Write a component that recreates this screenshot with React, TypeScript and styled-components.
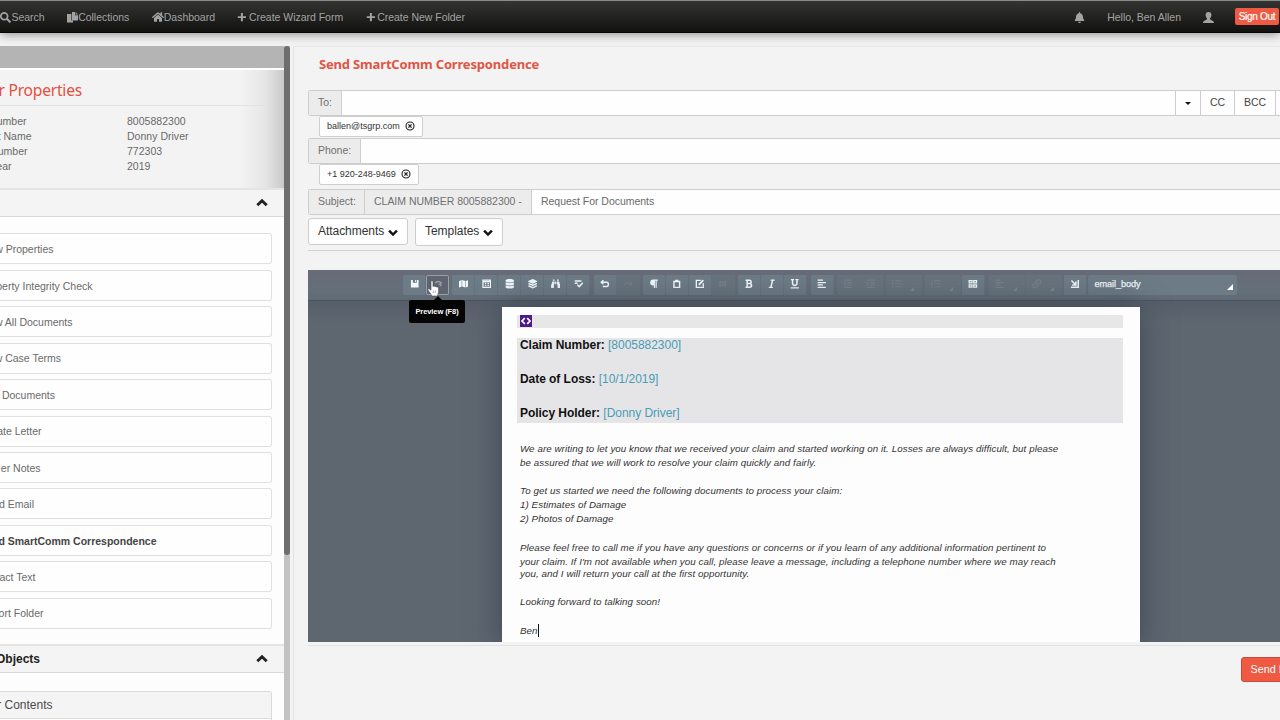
import React from 'react';
import styled, { createGlobalStyle, css } from 'styled-components';
import {
  FaMap, FaDatabase, FaLayerGroup, FaBinoculars, FaBell, FaBold, FaItalic, FaUnderline,
  FaAlignLeft, FaParagraph, FaHome, FaListUl, FaListOl, FaLink, FaIndent, FaOutdent,
} from 'react-icons/fa';
import { MdRedo, MdViewModule } from 'react-icons/md';

const Global = createGlobalStyle`
  * { box-sizing: border-box; }
  html, body { margin: 0; padding: 0; }
  body {
    width: 1280px; height: 720px; overflow: hidden; background: #f3f3f3;
    font-family: "Liberation Sans", Arial, sans-serif; font-size: 10.5px; color: #6a6a6a;
  }
  svg { display: block; flex: none; }
`;

const Shell = styled.div`
  width: 1280px; height: 720px; overflow: hidden; display: flex; flex-direction: column;
`;
const NavBar = styled.header`
  height: 33px; flex: none; display: flex; align-items: center; padding-top: 1px;
  border-top: 1px solid #8c8c8c; border-bottom: 1px solid #050505;
  background: linear-gradient(#343432, #111110); color: #a3a3a3; position: relative;
  box-shadow: 0 1px 10px rgba(0, 0, 0, 0.45);
`;
const NavItem = styled.a<{ $gap?: number; $space?: number }>`
  display: flex; align-items: center; gap: ${p => p.$space ?? 1}px;
  margin-left: ${p => p.$gap ?? 0}px; white-space: nowrap; line-height: 14px; letter-spacing: -0.02px;
`;
const NavFill = styled.div`flex: 1;`;
const SignOut = styled.button`
  width: 44px; height: 17px; border: 0; border-radius: 2px; background: #ee5a43; color: #fff; padding: 0;
  margin: -2px 1px 0 21px; font: 10px "Liberation Sans", Arial, sans-serif; letter-spacing: -0.3px;
  -webkit-text-stroke: 0.2px #fff;
`;

const Body = styled.div`flex: 1; display: flex; min-height: 0; padding-top: 13px;`;
const Sidebar = styled.aside`width: 284px; flex: none; overflow: hidden; background: #fdfdfd;`;
const GreyStrip = styled.div`height: 22px; background: #b4b4b4;`;
const Properties = styled.section`
  height: 120px; border-top: 2px solid #fff;
  background: linear-gradient(90deg, #f3f3f3 240px, #e6e6e6 265px, #c9c9c9 284px);
`;
const PropTitle = styled.h2`
  margin: 0 20px 0 0; height: 36px; padding-top: 9px; border-bottom: 1px solid #e2e2e2;
  font: 15.6px/22px "Noto Sans", "Open Sans", sans-serif; color: #e4503f; letter-spacing: -0.22px;
`;
const Clip = styled.span<{ $end: number }>`
  display: flex; justify-content: flex-end; width: ${p => p.$end}px; white-space: pre; flex: none;
`;
const PropList = styled.dl`margin: 0; padding-top: 8px;`;
const PropRow = styled.div`
  display: flex; height: 15px; line-height: 15px;
  dt { width: 127px; } dd { margin: 0; letter-spacing: 0.02px; }
`;
const SectionHead = styled.div<{ $h: number }>`
  height: ${p => p.$h}px; border-top: 2px solid #e4e4e4; border-bottom: 1px solid #d9d9d9; background: #f4f4f4;
  display: flex; align-items: center; justify-content: space-between; padding: 0 16px 1px 0;
  color: #222; font-weight: bold; font-size: 12px;
`;
const MenuList = styled.nav`
  height: 427px; padding: 16.4px 12px 0 0; display: flex; flex-direction: column; gap: 5.45px;
`;
const MenuItem = styled.a<{ $active?: boolean }>`
  height: 31px; flex: none; border: 1px solid #e0e0e0; border-left: 0; border-radius: 0 3px 3px 0; background: #fefefe;
  display: flex; align-items: center; padding-top: 0.4px;
  ${p => p.$active && css`font-weight: bold; color: #444;`}
`;
const ContentsBox = styled.div`
  margin: 18px 12px 0 0; height: 40px; border: 1px solid #d9d9d9; border-left: 0; border-radius: 0 3px 0 0; background: #fff;
  > div { height: 27px; display: flex; align-items: center; background: #f4f4f4; border-bottom: 1px solid #ddd; font-size: 12px; color: #4a4a4a; }
`;
const ScrollTrack = styled.div`width: 6px; flex: none; background: #c2c2c2;`;
const ScrollThumb = styled.div`height: 509px; border-radius: 3px; background: #6e6e6e;`;

const Main = styled.main`
  flex: 1; min-width: 0; margin-left: 3px; padding-left: 14px; border-left: 1px solid #e3e3e3; border-top: 1px solid #e6e6e6;
  display: flex; flex-direction: column; overflow: hidden;
`;
const Title = styled.h1`
  margin: 7px 0 16px 11px; height: 20px; flex: none; white-space: nowrap;
  font: bold 13px/20px "Noto Sans", "Open Sans", sans-serif; color: #e05544; letter-spacing: -0.17px;
`;
const FieldRow = styled.div`
  display: flex; height: 25.5px; flex: none; border: 1px solid #cdcdcd; border-right: 0; border-radius: 3px 0 0 3px;
  background: #fefefe; width: 972px; line-height: 22.6px;
`;
const Addon = styled.span<{ $w: number }>`
  width: ${p => p.$w}px; flex: none; padding-left: 9px; background: #ececec; border-right: 1px solid #cfcfcf; color: #707070; white-space: nowrap;
  letter-spacing: -0.02px;
`;
const FieldValue = styled.span`flex: 1; padding-left: 9px; white-space: nowrap; letter-spacing: -0.03px;`;
const RowButton = styled.button<{ $w: number }>`
  width: ${p => p.$w}px; flex: none; border: 0; border-left: 1px solid #cdcdcd; background: #fefefe; color: #444; padding: 0 0 1px;
  font: 10.5px "Liberation Sans", Arial, sans-serif; display: flex; align-items: center; justify-content: center;
`;
const Caret = styled.i`border: 3px solid transparent; border-top-color: #111; border-bottom: 0; margin-top: 2px;`;
const ChipRow = styled.div<{ $h: number }>`height: ${p => p.$h}px; flex: none; padding-left: 11px; display: flex; align-items: flex-start;`;
const Chip = styled.span<{ $w: number }>`
  width: ${p => p.$w}px; height: 21.5px; border: 1px solid #cfcfcf; border-radius: 2px; background: #fefefe; color: #333;
  display: flex; align-items: center; justify-content: space-between; padding: 0 7px 1.5px; font-size: 9px; white-space: nowrap;
`;
const Actions = styled.div`
  display: flex; gap: 7.5px; height: 36px; flex: none; padding-top: 3.500px; border-bottom: 1px solid #d2d2d2; margin-bottom: 19px;
`;
const DropButton = styled.button<{ $w: number; $h: number }>`
  width: ${p => p.$w}px; height: ${p => p.$h}px; border: 1px solid #cdcdcd; border-radius: 3px; background: #fefefe; color: #333;
  display: flex; align-items: center; justify-content: space-between; padding: 0 9px ${p => p.$h - 25}px; font: 12px "Liberation Sans", Arial, sans-serif;
  letter-spacing: -0.05px;
  svg { margin-top: 4px; }
`;

const Editor = styled.section`
  height: 372px; flex: none; background: #5e6670; display: flex; flex-direction: column; overflow: hidden; width: 972px;
`;
const Toolbar = styled.div`
  height: 31px; flex: none; display: flex; padding: 5px 0 0 95px; border-bottom: 1px solid #4b5460;
  background: linear-gradient(#686b78, #646f79 70%, #616b75);
`;
const Group = styled.div<{ $gap?: number }>`
  display: flex; height: 20px; margin-left: ${p => p.$gap ?? 0}px; flex: none;
`;
const Tool = styled.button<{ $off?: boolean; $hover?: boolean; $wide?: boolean }>`
  width: ${p => (p.$wide ? 36 : 23)}px; height: 20px; padding: 0 0 1px 6.5px; border: 0; border-radius: 1px;
  display: flex; align-items: center; color: #f1f7fb; background: #6d7b86; box-shadow: inset -1px 0 #65737e;
  > svg { width: 9.5px; height: 9.5px; }
  ${p => p.$off && css`background: #67737d; box-shadow: none; color: #74808a;`}
  ${p => p.$hover && css`background: #5e6470; color: #99a1aa; box-shadow: inset 0 0 0 1px #989fa9; border-radius: 2px;`}
`;
const Corner = styled.i<{ $dim?: boolean }>`
  border-left: ${p => (p.$dim ? 4 : 6)}px solid transparent; border-bottom: ${p => (p.$dim ? 4 : 6)}px solid ${p => (p.$dim ? '#7d8993' : '#fff')};
  margin: ${p => (p.$dim ? '10px 0 0 8px' : '6px 0 0')};
`;
const BodySelect = styled.div`
  width: 149px; height: 20px; margin-left: 1.5px; background: #6d7b86; border-radius: 2px; color: #eef3f6;
  display: flex; align-items: center; justify-content: space-between; padding: 0 4px 1px 6.5px; font-size: 9.2px; letter-spacing: -0.1px;
  -webkit-text-stroke: 0.25px #eef3f6;
`;
const Canvas = styled.div`flex: 1; padding: 6px 0 0 193.5px; min-height: 0; background: linear-gradient(#565f69, #5e6670 22px);`;
const Paper = styled.article`
  width: 638.5px; height: 340px; background: #fdfdfd; padding: 8px 17px 0 15px; box-shadow: 0 0 28px rgba(50, 62, 72, 0.75);
  color: #333; white-space: nowrap;
`;
const TagBar = styled.div`height: 13px; background: #e7e7e8; padding-left: 3px; display: flex; align-items: center; margin-bottom: 10px;`;
const FieldBlock = styled.div`height: 85px; background: #e5e5e8; padding-left: 3.5px; font-size: 12px; color: #111; margin-bottom: 19px;`;
const FieldLine = styled.p`
  margin: 0; height: 34px; line-height: 14px;
  b { letter-spacing: -0.05px; } span { color: #4a9cb5; letter-spacing: -0.03px; }
`;
const Paragraph = styled.div`padding-left: 3.5px; margin-bottom: 14.3px; font-size: 9.75px; font-style: italic;`;
const Line = styled.p<{ $h?: number }>`
  margin: 0; height: ${p => p.$h ?? 14.15}px; line-height: 14px; letter-spacing: 0.077px;
`;
const TextCursor = styled.i`display: inline-block; width: 1px; height: 13px; background: #111; vertical-align: -3px;`;
const Footer = styled.footer`
  width: 972px; flex: none; margin-top: 3px; border-top: 1px solid #e2e2e2; display: flex; justify-content: flex-end; padding-top: 11px;
`;
const SendButton = styled.button`
  width: 90px; height: 25.5px; flex: none; border: 1px solid #c9483a; border-radius: 3px; background: #f05a43; color: #fff;
  font: 10.8px "Liberation Sans", Arial, sans-serif; text-align: left; padding: 0 9px; margin-right: -50.5px; white-space: nowrap;
`;
const Tooltip = styled.div`
  position: absolute; left: 409px; top: 300px; width: 56px; height: 23px; border-radius: 2px; background: #050505; color: #fff;
  font-size: 7.5px; font-weight: bold; line-height: 23px; text-align: center; white-space: nowrap; z-index: 2; letter-spacing: -0.08px;
  &::before {
    content: ''; position: absolute; left: 25px; top: -4px; border: 4px solid transparent; border-bottom-color: #050505; border-top: 0;
  }
`;
const Pointer = styled.svg`position: absolute; left: 427px; top: 279.5px; z-index: 3;`;

const Chevron = ({ up, size = 12, color = '#222' }: { up?: boolean; size?: number; color?: string }) => (
  <svg width={size} height={size * 0.75} viewBox="0 0 12 9" fill="none" stroke={color} strokeWidth="2.9">
    <path d={up ? 'M1.3 7.3 6 2.7l4.7 4.6' : 'M1.3 2 6 6.6 10.7 2'} />
  </svg>
);
const CloseCircle = () => (
  <svg width="10" height="10" viewBox="0 0 10 10" fill="none" stroke="#222" strokeWidth="1.1">
    <circle cx="5" cy="5" r="4" /><path d="M3.4 3.4l3.2 3.2M6.6 3.4L3.4 6.6" strokeWidth="1.3" />
  </svg>
);
const SearchIcon = () => (
  <svg width="11" height="11" viewBox="0 0 11 11" fill="none" stroke="currentColor" strokeWidth="1.7">
    <circle cx="4.2" cy="4.2" r="3.4" /><path d="M6.8 6.8l3.6 3.6" strokeWidth="2" />
  </svg>
);
const CollectionsIcon = () => (
  <svg width="11" height="11" viewBox="0 0 11 11" fill="currentColor">
    <path d="M0 2h4.400v6.500H6V10.500H0z" /><path d="M5 0h3v3.200h3V8.500H5z" /><path d="M8.600 0 11 2.600H8.600z" />
  </svg>
);
const PlusIcon = () => (
  <svg width="10" height="10" viewBox="0 0 10 10" fill="currentColor"><path d="M3.900 1h2v3.200H9v1.900H5.900V9.300h-2V6.100H.8V4.200h3.100z" /></svg>
);
const PersonIcon = () => (
  <svg width="11" height="11" viewBox="0 0 11 11" fill="currentColor">
    <path d="M5.5 0c1.900 0 2.900 1.200 2.900 2.900 0 1.500-.7 2.600-1.400 3.300v1c.5 1 4 1 4 3.800H0c0-2.800 3.500-2.800 4-3.800v-1C3.300 5.500 2.600 4.400 2.600 2.900 2.600 1.200 3.600 0 5.500 0z" />
  </svg>
);
const SaveIcon = () => (
  <svg viewBox="0 0 10 10"><path fill="currentColor" fillRule="evenodd" d="M1 1h2v3h4.200V1H9v8H1zM5.400 1h1v2.200h-1z" /></svg>
);
const PreviewIcon = () => (
  <svg viewBox="0 0 10 10" fill="none" stroke="currentColor" strokeWidth="1.500"><path d="M2.500 4.500C4 1.800 7.500 2 9 5" /><path d="M6 5.500h2v2" /></svg>
);
const FieldsIcon = () => (
  <svg viewBox="0 0 10 10" fill="none" stroke="currentColor" strokeWidth="1.3">
    <rect x="1" y="1.200" width="8" height="7.600" /><path d="M1 2.800h8M3 4.600h1.500M5.800 4.600h1.500M3 6.600h1.500M5.800 6.600h1.500" />
  </svg>
);
const SpellIcon = () => (
  <svg viewBox="0 0 10 10" fill="none" stroke="currentColor" strokeWidth="1.600">
    <path d="M.8 2.200h7M.8 4.400h3M3.500 6l2 2L9.200 4" />
  </svg>
);
const UndoIcon = () => (
  <svg viewBox="0 0 10 10" fill="none" stroke="currentColor" strokeWidth="1.500">
    <path d="M3.600 1.300 1.300 3.400l2.300 2.100M1.300 3.400H7a1.800 2.200 0 0 1 0 4.500H3" />
  </svg>
);
const PasteIcon = () => (
  <svg viewBox="0 0 10 10" fill="none" stroke="currentColor" strokeWidth="1.500">
    <path d="M2 2.700h6v6.100H2z" /><path d="M3.300 1.900h3.400" strokeWidth="2.200" />
  </svg>
);
const EditIcon = () => (
  <svg viewBox="0 0 10 10" fill="none" stroke="currentColor" strokeWidth="1.400">
    <path d="M6 1.500H1.400v7.300h7.300V4.500" /><path d="M4 6.300 8.700 1.300" strokeWidth="1.900" />
  </svg>
);
const InsertIcon = () => (
  <svg viewBox="0 0 10 10" fill="none" stroke="currentColor" strokeWidth="1.600">
    <path d="M1.500 1.500 6 6M6.200 2.500v3.700H2.300M8.700 1v7.700H1" />
  </svg>
);
const GridIcon = () => (
  <svg viewBox="0 0 10 10" fill="none" stroke="currentColor" strokeWidth="1.300">
    <path d="M1.200 1.700h3v2.400h-3zM6 1.700h3v2.400H6zM1.200 6.100h3v2.400h-3zM6 6.100h3v2.400H6z" />
  </svg>
);
const CodeTag = () => (
  <svg width="12" height="12" viewBox="0 0 12 12">
    <rect width="12" height="12" fill="#4d1a8b" />
    <path d="M4.800 3.200 2 6l2.800 2.800M7.200 3.200 10 6 7.200 8.800" fill="none" stroke="#fff" strokeWidth="1.700" />
  </svg>
);

const properties: [string, number, string][] = [
  ['umber', 26.5, '8005882300'], ['t Name', 31.5, 'Donny Driver'], ['umber', 27.5, '772303'], ['ear', 11.5, '2019'],
];
const menu: [string, number][] = [
  ['w Properties', 53.5], ['perty Integrity Check', 92.5], ['w All Documents', 72.5], ['w Case Terms', 61], ['Documents', 55],
  ['ate Letter', 41.5], ['er Notes', 40.5], ['d Email', 34], ['d SmartComm Correspondence', 156.5], ['act Text', 35.5], ['ort Folder', 43.5],
];

export default function App() {
  return (
    <Shell>
      <Global />
      <NavBar>
        <NavItem $space={0.5}><SearchIcon />Search</NavItem>
        <NavItem $gap={22} $space={0.5}><CollectionsIcon />Collections</NavItem>
        <NavItem $gap={22.5} $space={-0.5}><FaHome size={12} />Dashboard</NavItem>
        <NavItem $gap={22.5} $space={1.5}><PlusIcon />Create Wizard Form</NavItem>
        <NavItem $gap={22.5} $space={1.5}><PlusIcon />Create New Folder</NavItem>
        <NavFill />
        <NavItem><FaBell size={11} /></NavItem>
        <NavItem $gap={22}>Hello, Ben Allen</NavItem>
        <NavItem $gap={22}><PersonIcon /></NavItem>
        <SignOut>Sign Out</SignOut>
      </NavBar>
      <Body>
        <Sidebar>
          <GreyStrip />
          <Properties>
            <PropTitle><Clip $end={82}>r Properties</Clip></PropTitle>
            <PropList>
              {properties.map(([label, end, value], i) => (
                <PropRow key={i}><dt><Clip $end={end}>{label}</Clip></dt><dd>{value}</dd></PropRow>
              ))}
            </PropList>
          </Properties>
          <SectionHead $h={29}><span /><Chevron up /></SectionHead>
          <MenuList>
            {menu.map(([label, end]) => (
              <MenuItem key={label} $active={label.startsWith('d Smart')}><Clip $end={end}>{label}</Clip></MenuItem>
            ))}
          </MenuList>
          <SectionHead $h={29}><Clip $end={40}>Objects</Clip><Chevron up /></SectionHead>
          <ContentsBox><div><Clip $end={52.5}>r Contents</Clip></div></ContentsBox>
        </Sidebar>
        <ScrollTrack><ScrollThumb /></ScrollTrack>
        <Main>
          <Title>Send SmartComm Correspondence</Title>
          <FieldRow>
            <Addon $w={33}>To:</Addon><FieldValue />
            <RowButton $w={25}><Caret /></RowButton>
            <RowButton $w={34}>CC</RowButton>
            <RowButton $w={41}>BCC</RowButton>
            <RowButton $w={5} />
          </FieldRow>
          <ChipRow $h={22.5}><Chip $w={104}>ballen@tsgrp.com<CloseCircle /></Chip></ChipRow>
          <FieldRow><Addon $w={52}>Phone:</Addon><FieldValue /></FieldRow>
          <ChipRow $h={25.5}><Chip $w={100}>+1 920-248-9469<CloseCircle /></Chip></ChipRow>
          <FieldRow>
            <Addon $w={56}>Subject:</Addon><Addon $w={167}>CLAIM NUMBER 8005882300 -</Addon>
            <FieldValue>Request For Documents</FieldValue>
          </FieldRow>
          <Actions>
            <DropButton $w={99.5} $h={27}>Attachments<Chevron size={10} color="#111" /></DropButton>
            <DropButton $w={87.5} $h={28}>Templates<Chevron size={10} color="#111" /></DropButton>
          </Actions>
          <Editor>
            <Toolbar>
              <Group><Tool><SaveIcon /></Tool><Tool $hover><PreviewIcon /></Tool></Group>
              <Group $gap={3}>
                <Tool><FaMap /></Tool><Tool><FieldsIcon /></Tool><Tool><FaDatabase /></Tool><Tool><FaLayerGroup /></Tool>
                <Tool><FaBinoculars /></Tool><Tool><SpellIcon /></Tool>
              </Group>
              <Group $gap={3.5}><Tool><UndoIcon /></Tool><Tool $off><MdRedo /></Tool></Group>
              <Group $gap={3}><Tool><FaParagraph /></Tool><Tool><PasteIcon /></Tool><Tool><EditIcon /></Tool><Tool $off><MdViewModule /></Tool></Group>
              <Group $gap={3}><Tool><FaBold /></Tool><Tool><FaItalic /></Tool><Tool><FaUnderline /></Tool></Group>
              <Group $gap={4}><Tool><FaAlignLeft /></Tool></Group>
              <Group $gap={3}><Tool $off><FaOutdent /></Tool><Tool $off><FaIndent /></Tool></Group>
              <Group $gap={3}><Tool $off $wide><FaListUl /><Corner $dim /></Tool></Group>
              <Group $gap={3}><Tool $off $wide><FaListOl /><Corner $dim /></Tool></Group>
              <Group $gap={1}><Tool><GridIcon /></Tool></Group>
              <Group $gap={4}><Tool $off $wide><FaAlignLeft /><Corner $dim /></Tool></Group>
              <Group $gap={1}><Tool $off $wide><FaLink /><Corner $dim /></Tool></Group>
              <Group $gap={2}><Tool><InsertIcon /></Tool></Group>
              <BodySelect>email_body<Corner /></BodySelect>
            </Toolbar>
            <Canvas>
              <Paper>
                <TagBar><CodeTag /></TagBar>
                <FieldBlock>
                  <FieldLine><b>Claim Number:</b> <span>[8005882300]</span></FieldLine>
                  <FieldLine><b>Date of Loss:</b> <span>[10/1/2019]</span></FieldLine>
                  <FieldLine><b>Policy Holder:</b> <span>[Donny Driver]</span></FieldLine>
                </FieldBlock>
                <Paragraph>
                  <Line>We are writing to let you know that we received your claim and started working on it. Losses are always difficult, but please</Line>
                  <Line>be assured that we will work to resolve your claim quickly and fairly.</Line>
                </Paragraph>
                <Paragraph>
                  <Line>To get us started we need the following documents to process your claim:</Line>
                  <Line>1) Estimates of Damage</Line>
                  <Line>2) Photos of Damage</Line>
                </Paragraph>
                <Paragraph>
                  <Line>Please feel free to call me if you have any questions or concerns or if you learn of any additional information pertinent to</Line>
                  <Line $h={12.5}>your claim. If I'm not available when you call, please leave a message, including a telephone number where we may reach</Line>
                  <Line $h={13.5}>you, and I will return your call at the first opportunity.</Line>
                </Paragraph>
                <Paragraph><Line>Looking forward to talking soon!</Line></Paragraph>
                <Paragraph><Line>Ben<TextCursor /></Line></Paragraph>
              </Paper>
            </Canvas>
          </Editor>
          <Footer><SendButton>Send Email</SendButton></Footer>
        </Main>
      </Body>
      <Tooltip>Preview (F8)</Tooltip>
      <Pointer width="14" height="17" viewBox="0 0 14 17">
        <path d="M4 1.500C4 .4 6 .4 6 1.500V6.500c.3-.8 1.900-.7 2 .3.500-.7 1.800-.4 1.900.5.500-.6 1.700-.2 1.700.8v3.400c0 1.500-1 2.500-1 4.500H4.800c-.5-2-3.300-4.500-3.900-6.200-.3-1 .9-1.600 1.700-.8L4 10.200z" fill="#fff" stroke="#444" strokeWidth=".6" />
        <path d="M6.300 10.500v2.500M8.200 10.500v2.500" stroke="#888" strokeWidth=".6" />
      </Pointer>
    </Shell>
  );
}
